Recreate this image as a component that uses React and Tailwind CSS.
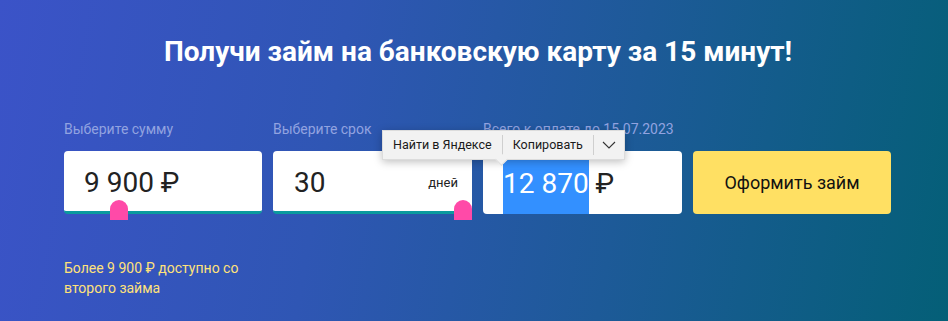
import React from "react";

const font = { fontFamily: "Roboto, 'Noto Sans', sans-serif" };

function Handle({ className }) {
  return (
    <span
      className={`absolute bottom-[-9px] w-[18px] h-[20px] rounded-t-full bg-[#ff4aa8] ${className}`}
    />
  );
}

function ContextMenu() {
  return (
    <div className="absolute left-[382px] top-[11px] h-[30px] flex items-stretch bg-[#f2f2f2] border border-[#dcdcdc] shadow-[0_2px_8px_rgba(0,0,0,0.25)] text-[12.5px] text-[#1a1a1a] z-10">
      <div className="flex items-center pl-[10px] pr-[10px]">Найти в Яндексе</div>
      <div className="w-px my-[4px] bg-[#cfcfcf]" />
      <div className="flex items-center px-[10px]">Копировать</div>
      <div className="w-px my-[4px] bg-[#cfcfcf]" />
      <div className="flex items-center px-[8px]">
        <svg width="14" height="8" viewBox="0 0 14 8" fill="none">
          <path d="M1 1l6 6 6-6" stroke="#333" strokeWidth="1.1" />
        </svg>
      </div>
      {/* pointer */}
      <span className="absolute left-[114px] bottom-[-5px] w-[9px] h-[9px] rotate-45 bg-[#f2f2f2] border-r border-b border-[#dcdcdc]" />
    </div>
  );
}

export default function App() {
  return (
    <div
      className="w-[948px] h-[321px] overflow-hidden bg-[linear-gradient(100deg,#3b53c8_0%,#2f56b4_35%,#1d5a98_65%,#045f77_100%)]"
      style={font}
    >
      <h1 className="pt-[34px] text-center text-white font-bold text-[28px] leading-[36px] pl-[8px]">
        Получи займ на банковскую карту за 15 минут!
      </h1>

      <div className="relative mt-[49px] pl-[64px] flex gap-[11px]">
        <ContextMenu />

        {/* Sum */}
        <div className="w-[198px] flex flex-col">
          <div className="text-[14px] leading-[20px] text-[#92a3e0] h-[32px]">Выберите сумму</div>
          <div className="relative h-[63px] bg-white rounded-[4px] border-b-[3px] border-[#0b9a9e] flex items-center pl-[20px] pt-[4px] text-[28px] text-[#222]">
            9 900 ₽
            <Handle className="left-[46px]" />
          </div>
          <p className="mt-[44px] text-[14px] leading-[20px] text-[#ffe27a]">
            Более 9 900 ₽ доступно со
            <br />
            второго займа
          </p>
        </div>

        {/* Term */}
        <div className="w-[199px] flex flex-col">
          <div className="text-[14px] leading-[20px] text-[#92a3e0] h-[32px]">Выберите срок</div>
          <div className="relative h-[63px] bg-white rounded-[4px] border-b-[3px] border-[#0b9a9e] flex items-center pl-[21px] pr-[14px] pt-[4px] text-[#222]">
            <span className="text-[28px]">30</span>
            <span className="ml-auto text-[13px]">дней</span>
            <Handle className="right-0" />
          </div>
        </div>

        {/* Total */}
        <div className="w-[199px] flex flex-col">
          <div className="text-[14px] leading-[20px] text-[#92a3e0] h-[32px]">Всего к оплате до 15.07.2023</div>
          <div className="h-[63px] bg-white rounded-[4px] flex items-stretch pl-[20px] text-[28px] text-[#222] overflow-hidden">
            <span className="flex items-center pt-[2px] bg-[#3390ff] text-white">12 870</span>
            <span className="flex items-center pt-[2px] whitespace-pre"> ₽</span>
          </div>
        </div>

        {/* Button */}
        <div className="w-[198px] flex flex-col">
          <div className="h-[32px]" />
          <button className="h-[63px] bg-[#ffe063] rounded-[4px] text-[18px] font-normal text-[#111]">
            Оформить займ
          </button>
        </div>
      </div>
    </div>
  );
}
